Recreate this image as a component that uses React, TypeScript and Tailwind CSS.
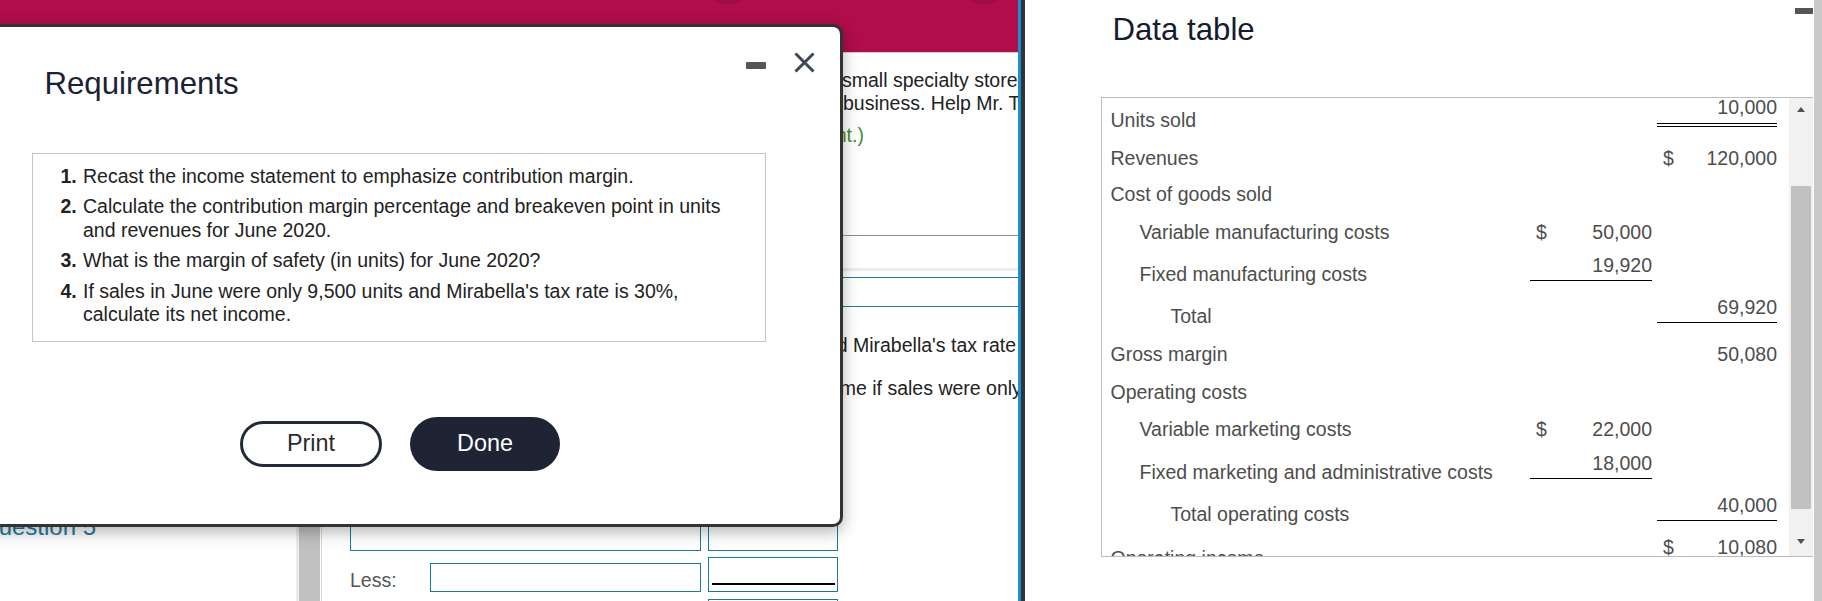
import React from "react";

type Amt = { v: string; d?: boolean; cls: string };
type Row = { label: string; ind: string; h: string; a?: Amt; b?: Amt };

const PLAIN = "pt-[7px]";
const UL = "mt-[-2.5px] pb-[3px] border-b-[1.5px] border-black";

const rows: Row[] = [
  { label: "Units sold", ind: "pl-0", h: "h-[37.5px]", b: { v: "10,000", cls: "mt-[-6px] pb-[3.5px] border-b-[4.5px] border-double border-black" } },
  { label: "Revenues", ind: "pl-0", h: "h-[36.5px]", b: { v: "120,000", d: true, cls: PLAIN } },
  { label: "Cost of goods sold", ind: "pl-0", h: "h-[38px]" },
  { label: "Variable manufacturing costs", ind: "pl-[29px]", h: "h-[42px]", a: { v: "50,000", d: true, cls: PLAIN } },
  { label: "Fixed manufacturing costs", ind: "pl-[29px]", h: "h-[42px]", a: { v: "19,920", cls: UL } },
  { label: "Total", ind: "pl-[60px]", h: "h-[38px]", b: { v: "69,920", cls: UL } },
  { label: "Gross margin", ind: "pl-0", h: "h-[38px]", b: { v: "50,080", cls: PLAIN } },
  { label: "Operating costs", ind: "pl-0", h: "h-[37px]" },
  { label: "Variable marketing costs", ind: "pl-[29px]", h: "h-[43px]", a: { v: "22,000", d: true, cls: PLAIN } },
  { label: "Fixed marketing and administrative costs", ind: "pl-[29px]", h: "h-[42px]", a: { v: "18,000", cls: UL } },
  { label: "Total operating costs", ind: "pl-[60px]", h: "h-[44px]", b: { v: "40,000", cls: UL } },
  { label: "Operating income", ind: "pl-0", h: "h-[40px]", b: { v: "10,080", d: true, cls: "mt-[-4px] pb-[3.5px] border-b-[4.5px] border-double border-black" } },
];

const reqs = [
  { n: "1.", t: "Recast the income statement to emphasize contribution margin." },
  { n: "2.", t: "Calculate the contribution margin percentage and breakeven point in units and revenues for June 2020." },
  { n: "3.", t: "What is the margin of safety (in units) for June 2020?" },
  { n: "4.", t: "If sales in June were only 9,500 units and Mirabella's tax rate is 30%, calculate its net income." },
];

function AmountCell({ amt, w, extra }: { amt?: Amt; w: string; extra?: string }) {
  return (
    <div className={`${w} shrink-0 ${extra ?? ""}`}>
      {amt && (
        <div className={`flex justify-between leading-[23px] ${amt.cls}`}>
          <span className="pl-[6px]">{amt.d ? "$" : ""}</span>
          <span>{amt.v}</span>
        </div>
      )}
    </div>
  );
}

function Modal() {
  return (
    <div className="absolute left-[-20px] top-[24px] w-[863px] h-[503px] bg-white border-[3px] border-[#333333] rounded-[10px] shadow-[0_5px_16px_rgba(0,0,0,0.3)] flex flex-col">
      <div className="h-[126px] shrink-0 flex justify-between items-start">
        <h2 className="ml-[61.5px] mt-[39.2px] text-[31.2px] leading-[36px] text-[#1b2233]">Requirements</h2>
        <div className="mt-[24.5px] mr-[25px] flex items-start gap-[28px]">
          <div className="mt-[10.5px] w-[20px] h-[7px] bg-[#555555] rounded-[1px]" />
          <svg width="21" height="21" viewBox="0 0 21 21" className="block">
            <line x1="1.5" y1="1.5" x2="19.5" y2="19.5" stroke="#3e4553" strokeWidth="3" />
            <line x1="19.5" y1="1.5" x2="1.5" y2="19.5" stroke="#3e4553" strokeWidth="3" />
          </svg>
        </div>
      </div>
      <div className="ml-[49px] w-[734px] h-[189px] shrink-0 border-[1.5px] border-[#c4c4c4] pt-[10.5px] pl-[27.5px]">
        <div className="flex flex-col gap-[7.2px] text-[19.5px] leading-[23.4px] text-[#222222]">
          {reqs.map((r) => (
            <div key={r.n} className="flex">
              <span className="w-[22.5px] shrink-0 font-bold">{r.n}</span>
              <span className="w-[656px]">{r.t}</span>
            </div>
          ))}
        </div>
      </div>
      <div className="mt-[75px] ml-[257px] h-[54px] flex items-center gap-[28px]">
        <button className="w-[142px] h-[46px] rounded-full border-[3px] border-[#222a38] bg-white text-[23.4px] text-[#2b2b2b] flex items-center justify-center">
          Print
        </button>
        <button className="w-[150px] h-[54px] rounded-full bg-[#1e2433] text-[23.4px] text-white flex items-center justify-center">
          Done
        </button>
      </div>
    </div>
  );
}

function LeftPane() {
  return (
    <div className="relative w-[1018px] h-full overflow-hidden flex flex-col shrink-0 bg-white">
      <header className="h-[52px] shrink-0 bg-[#b00d4a] flex items-start overflow-hidden">
        <div className="ml-[698px] mt-[-56px] w-[60px] h-[60px] shrink-0 rounded-full bg-[#9b1144]" />
        <div className="ml-[196px] mt-[-56px] w-[60px] h-[60px] shrink-0 rounded-full bg-[#9b1144]" />
      </header>
      <div className="h-[1px] shrink-0 bg-[#cfcfcf]" />
      <div className="flex flex-1">
        <div className="w-[296px] shrink-0 flex flex-col">
          <div className="mt-[460px] ml-[-20px] whitespace-nowrap text-[24px] leading-[28px] text-[#1c7ca5]">Question 5</div>
        </div>
        <div className="w-[24px] shrink-0 bg-[#c1c1c1] border-l-[3px] border-[#ececec]" />
        <div className="w-[1px] shrink-0" />
        <div className="w-[1px] shrink-0 bg-[#d3d8e2]" />
        <div className="w-[696px] shrink-0 flex flex-col text-[19.5px] leading-[23.4px] text-[#222222]">
          <div className="mt-[16px] ml-[520px] whitespace-nowrap">small specialty store</div>
          <div className="ml-[521px] whitespace-nowrap">business. Help Mr. Torres</div>
          <div className="mt-[8px] ml-[465px] whitespace-nowrap text-[#3f8f29]">percent.)</div>
          <div className="mt-[87.8px] ml-[400px] w-[400px] h-[33px] shrink-0 border-t border-[#8d929b]" />
          <div className="ml-[400px] w-[400px] h-[3px] shrink-0 bg-[#ebebeb]" />
          <div className="mt-[6px] ml-[400px] w-[400px] h-[30px] shrink-0 border-[1.5px] border-[#1b7a9a]" />
          <div className="mt-[26.5px] ml-[493px] whitespace-nowrap">and Mirabella's tax rate is 30%</div>
          <div className="mt-[19.6px] ml-[482px] whitespace-nowrap">income if sales were only 9,500 units</div>
          <div className="mt-[112px] flex shrink-0">
            <div className="ml-[28px] w-[351px] h-[39px] border-[1.5px] border-[#1b7a9a]" />
            <div className="ml-[7px] w-[130px] h-[39px] border-[1.5px] border-[#1b7a9a]" />
          </div>
          <div className="mt-[6px] h-[35px] flex items-start shrink-0">
            <div className="ml-[28px] w-[80px] mt-[12.5px] text-[#555555]">Less:</div>
            <div className="mt-[6px] w-[271px] h-[29px] border-[1.5px] border-[#1b7a9a]" />
            <div className="ml-[7px] w-[130px] h-[35px] border-[1.5px] border-[#1b7a9a] pt-[25.5px] px-[2.5px]">
              <div className="h-[1.5px] bg-black" />
            </div>
          </div>
          <div className="mt-[7px] ml-[386px] w-[130px] h-[30px] shrink-0 border-[1.5px] border-[#1b7a9a]" />
        </div>
      </div>
      <Modal />
    </div>
  );
}

function RightPane() {
  return (
    <div className="flex-1 flex bg-white">
      <div className="w-[788px] flex flex-col">
        <div className="h-[97px] shrink-0 flex justify-between items-start">
          <h2 className="ml-[87.5px] mt-[12px] text-[31.2px] leading-[36px] text-[#161c2d]">Data table</h2>
          <div className="mt-[8px] w-[18px] h-[6px] bg-[#555555]" />
        </div>
        <div className="ml-[76px] h-[459.5px] shrink-0 flex border-t-[1.5px] border-l-[1.5px] border-b-[1.5px] border-[#bdbdbd]">
          <div className="flex-1 overflow-hidden pt-[4.2px] pl-[8.5px] pr-[12px] text-[19.5px] text-[#4d4d4d]">
            {rows.map((r) => (
              <div key={r.label} className={`flex items-start ${r.h}`}>
                <div className={`flex-1 pt-[7px] leading-[23px] whitespace-nowrap ${r.ind}`}>{r.label}</div>
                <AmountCell amt={r.a} w="w-[122px]" />
                <AmountCell amt={r.b} w="w-[120px]" extra="ml-[5px]" />
              </div>
            ))}
          </div>
          <div className="w-[24px] shrink-0 bg-[#f1f1f1] flex flex-col">
            <div className="h-[22px] shrink-0 flex justify-center pt-[8.5px]">
              <div className="w-0 h-0 border-l-[4px] border-r-[4px] border-b-[5px] border-l-transparent border-r-transparent border-b-[#505050]" />
            </div>
            <div className="flex-1">
              <div className="mt-[65.5px] mx-[2px] h-[323px] bg-[#c1c1c1]" />
            </div>
            <div className="h-[22px] shrink-0 flex justify-center pt-[5px]">
              <div className="w-0 h-0 border-l-[4px] border-r-[4px] border-t-[5px] border-l-transparent border-r-transparent border-t-[#505050]" />
            </div>
          </div>
        </div>
      </div>
      <div className="w-[9px] shrink-0 border-l border-white bg-[#c9c9c9]" />
    </div>
  );
}

export default function App() {
  return (
    <div className="w-[1822px] h-[601px] flex overflow-hidden bg-white font-['Liberation_Sans',Arial,sans-serif]">
      <LeftPane />
      <div className="w-[3px] shrink-0 bg-[#1a8fd6]" />
      <div className="w-[4px] shrink-0 bg-[#333333]" />
      <RightPane />
    </div>
  );
}
